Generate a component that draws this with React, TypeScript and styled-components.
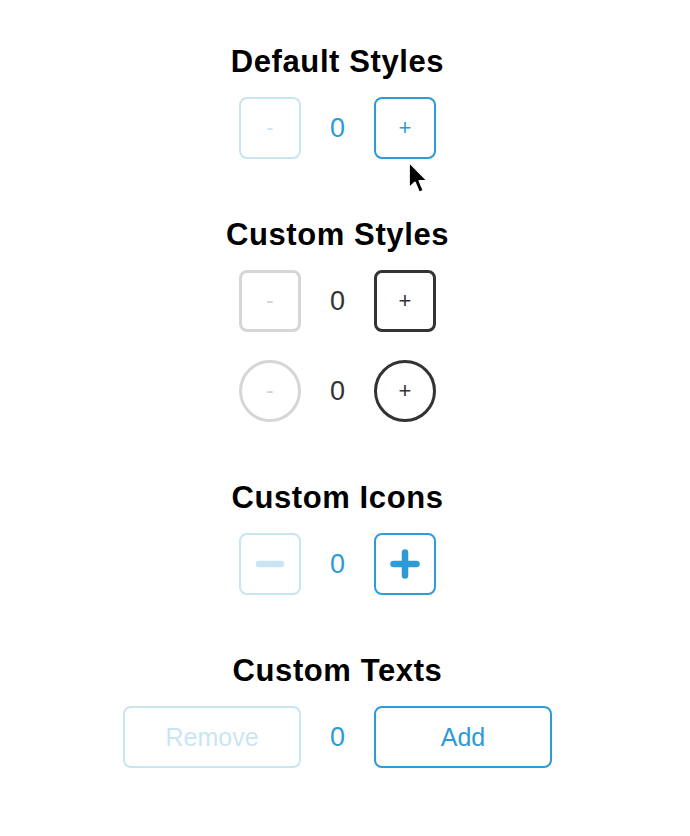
import React, { useState } from "react";
import styled, { createGlobalStyle, css } from "styled-components";

const GlobalStyle = createGlobalStyle`
  html, body {
    margin: 0;
    padding: 0;
    background: #ffffff;
  }
  body {
    font-family: "Liberation Sans", Arial, sans-serif;
    -webkit-font-smoothing: antialiased;
  }
`;

const BLUE = "#2e9bd6";

const Page = styled.div`
  width: 675px;
  padding-top: 40px;
  display: flex;
  flex-direction: column;
  align-items: center;
  position: relative;
`;

const Section = styled.section`
  display: flex;
  flex-direction: column;
  align-items: center;
  gap: 28px;
  margin-bottom: 54px;
`;

const Title = styled.h2`
  margin: 0 0 -13px;
  padding-top: 2px;
  font-size: 31px;
  line-height: 40px;
  font-weight: 700;
  letter-spacing: 0.6px;
  color: #000;
`;

type Variant = "default" | "square" | "round" | "icon" | "text";

const Row = styled.div`
  display: flex;
  align-items: center;
`;

const Count = styled.span<{ $dark?: boolean }>`
  width: 73px;
  text-align: center;
  font-size: 27px;
  padding-top: 1px;
  color: ${(p) => (p.$dark ? "#333" : BLUE)};
`;

const StepButton = styled.button<{ $variant: Variant; $disabled?: boolean }>`
  box-sizing: border-box;
  width: ${(p) => (p.$variant === "text" ? "178px" : "62px")};
  height: 62px;
  padding: 0;
  display: flex;
  align-items: center;
  justify-content: center;
  background: #fff;
  font-family: inherit;
  cursor: pointer;
  border-radius: 8px;
  border: 2px solid ${BLUE};
  color: ${BLUE};
  font-size: 22px;
  ${(p) =>
    (p.$variant === "square" || p.$variant === "round") &&
    css`
      border: 3px solid #333;
      color: #333;
    `}
  ${(p) =>
    p.$variant === "round" &&
    css`
      border-radius: 50%;
    `}
  ${(p) =>
    p.$variant === "text" &&
    css`
      font-size: 25px;
    `}
  ${(p) =>
    p.$disabled &&
    (p.$variant === "square" || p.$variant === "round"
      ? css`
          border-color: #d6d6d6;
          color: #d0d0d0;
        `
      : css`
          opacity: 0.25;
        `)}
`;

const Cursor = styled.svg`
  position: absolute;
  left: 406px;
  top: 159px;
  width: 26px;
  height: 38px;
  pointer-events: none;
`;

const PlusIcon = () => (
  <svg width="30" height="30" viewBox="0 0 30 30">
    <path d="M15 3.5v23M3.5 15h23" stroke={BLUE} strokeWidth="6.5" strokeLinecap="round" />
  </svg>
);

const MinusIcon = () => (
  <svg width="30" height="30" viewBox="0 0 30 30">
    <path d="M4 15h22" stroke={BLUE} strokeWidth="6.5" strokeLinecap="round" />
  </svg>
);

type CounterProps = {
  variant: Variant;
  minus: React.ReactNode;
  plus: React.ReactNode;
  dark?: boolean;
};

const Counter = ({ variant, minus, plus, dark }: CounterProps) => {
  const [value, setValue] = useState(0);
  return (
    <Row>
      <StepButton
        $variant={variant}
        $disabled={value <= 0}
        onClick={() => value > 0 && setValue(value - 1)}
      >
        {minus}
      </StepButton>
      <Count $dark={dark}>{value}</Count>
      <StepButton $variant={variant} onClick={() => setValue(value + 1)}>
        {plus}
      </StepButton>
    </Row>
  );
};

export default function App() {
  return (
    <>
      <GlobalStyle />
      <Page>
        <Section>
          <Title>Default Styles</Title>
          <Counter variant="default" minus="-" plus="+" />
        </Section>
        <Section>
          <Title>Custom Styles</Title>
          <Counter variant="square" minus="-" plus="+" dark />
          <Counter variant="round" minus="-" plus="+" dark />
        </Section>
        <Section>
          <Title>Custom Icons</Title>
          <Counter variant="icon" minus={<MinusIcon />} plus={<PlusIcon />} />
        </Section>
        <Section>
          <Title>Custom Texts</Title>
          <Counter variant="text" minus="Remove" plus="Add" />
        </Section>
        <Cursor viewBox="0 0 26 38">
          <path
            d="M3 3 L3 29 L9 23.5 L13.2 33.5 L17.6 31.6 L13.4 21.8 L21.5 21.8 Z"
            fill="#000"
            stroke="#fff"
            strokeWidth="1.8"
            strokeLinejoin="round"
          />
        </Cursor>
      </Page>
    </>
  );
}
